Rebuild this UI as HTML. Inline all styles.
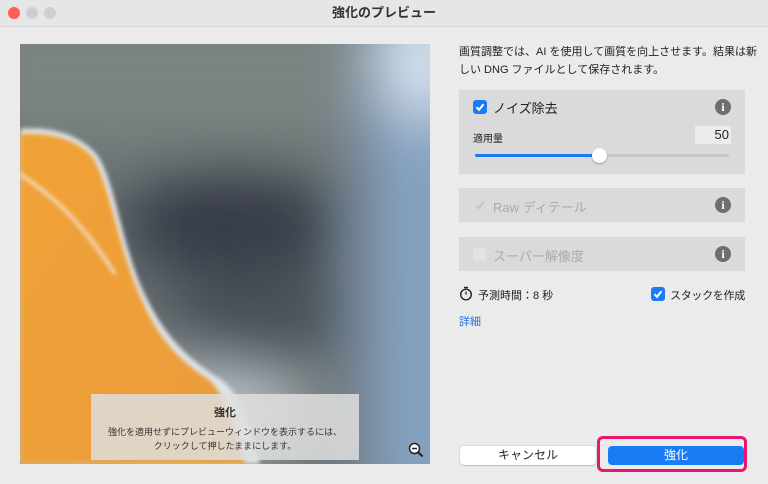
<!DOCTYPE html>
<html><head><meta charset="utf-8"><style>
html,body{margin:0;width:768px;height:484px;overflow:hidden}
body{background:#ebebeb;font-family:"Liberation Sans","Noto Sans CJK JP",sans-serif;position:relative;color:#222}
.tb{position:absolute;left:0;top:0;width:768px;height:26px;background:#e6e6e6;border-bottom:1px solid #d4d4d4;text-align:center;font-size:13px;font-weight:bold;line-height:26px;color:#333}
.dot{position:absolute;top:7px;width:12px;height:12px;border-radius:50%}
.img{position:absolute;left:20px;top:44px;width:410px;height:420px;overflow:hidden;background:#6a7274}
.abs{position:absolute}
.panel{position:absolute;left:459px;width:286px;background:#dadada}
.info{position:absolute;right:14px;width:16px;height:16px;border-radius:50%;background:#6e6e6e;color:#fff;font:bold 12px "Liberation Serif",serif;text-align:center;line-height:16px}
.cb{position:absolute;width:14px;height:14px;border-radius:3px;background:#1a7cf5}
</style></head><body>
<div class="tb">強化のプレビュー</div>
<div class="dot" style="left:8px;background:#fd5f57"></div>
<div class="dot" style="left:26px;background:#cfcfcf"></div>
<div class="dot" style="left:44px;background:#cfcfcf"></div>

<div class="img">
<svg width="410" height="420" viewBox="0 0 410 420">
<defs>
<filter id="b" filterUnits="userSpaceOnUse" x="-200" y="-200" width="810" height="820"><feGaussianBlur stdDeviation="30"/></filter>
<filter id="s" filterUnits="userSpaceOnUse" x="-50" y="-50" width="510" height="520"><feGaussianBlur stdDeviation="2"/></filter>
<linearGradient id="o" x1="0" y1="0" x2="1" y2="1"><stop offset="0" stop-color="#f1a236"/><stop offset="1" stop-color="#e99c3c"/></linearGradient>
</defs>
<rect width="410" height="420" fill="#6a7274"/>
<g filter="url(#b)">
<rect x="-50" y="-50" width="510" height="150" fill="#7c8482"/>
<ellipse cx="210" cy="180" rx="110" ry="55" fill="#343b47"/>
<ellipse cx="240" cy="270" rx="90" ry="50" fill="#4a5159"/>
<rect x="345" y="-50" width="120" height="520" fill="#86a3c2"/>
<ellipse cx="405" cy="15" rx="40" ry="60" fill="#dde9f4"/>
<ellipse cx="180" cy="370" rx="110" ry="40" fill="#c5ccd4"/>
</g>
<path d="M0 85 C30 82 60 90 78 112 C95 140 100 190 120 240 C140 285 160 310 200 335 C220 348 230 380 240 420 L0 420 Z" fill="#dfe3e8" filter="url(#s)"/>
<path d="M0 90 C30 88 58 95 74 115 C90 145 96 190 115 240 C133 285 150 310 188 335 C205 350 215 380 225 420 L0 420 Z" fill="url(#o)" filter="url(#s)"/>
<path d="M0 130 C30 150 60 175 95 230" stroke="#f4e6d6" stroke-width="3" fill="none" filter="url(#s)"/>
</svg>
 <div class="abs" style="left:71px;top:350px;width:268px;height:66px;background:rgba(222,222,222,.85);text-align:center;color:#333">
  <div style="font-size:11px;font-weight:bold;margin-top:10px">強化</div>
  <div style="font-size:9px;line-height:14px;margin-top:5px">強化を適用せずにプレビューウィンドウを表示するには、<br>クリックして押したままにします。</div>
 </div>
 <svg class="abs" style="left:388px;top:398px" width="16" height="16" viewBox="0 0 16 16"><circle cx="6.5" cy="6.5" r="5" fill="#fff" stroke="#222" stroke-width="1.5"/><line x1="4" y1="6.5" x2="9" y2="6.5" stroke="#222" stroke-width="1.5"/><line x1="10" y1="10" x2="14.5" y2="14.5" stroke="#222" stroke-width="2"/></svg>
</div>

<div class="abs" style="left:459px;top:43px;font-size:11px;line-height:18px;width:300px">画質調整では、AI を使用して画質を向上させます。結果は新しい DNG ファイルとして保存されます。</div>

<div class="panel" style="top:90px;height:84px">
 <div class="cb" style="left:14px;top:10px"><svg width="14" height="14"><path d="M3.5 7.2 L6 9.8 L10.5 4.2" stroke="#fff" stroke-width="2" fill="none"/></svg></div>
 <div class="abs" style="left:34px;top:8px;font-size:13px">ノイズ除去</div>
 <div class="info" style="top:9px">i</div>
 <div class="abs" style="left:14px;top:40px;font-size:10px">適用量</div>
 <div class="abs" style="left:236px;top:36px;width:34px;height:18px;background:#ececec;font-size:13px;text-align:right;line-height:18px;padding-right:2px">50</div>
 <div class="abs" style="left:16px;top:64px;width:254px;height:3px;background:#c8c8c8;border-radius:2px"></div>
 <div class="abs" style="left:16px;top:64px;width:126px;height:3px;background:#1a7cf5;border-radius:2px"></div>
 <div class="abs" style="left:133px;top:58px;width:15px;height:15px;border-radius:50%;background:#fff;box-shadow:0 1px 2px rgba(0,0,0,.3)"></div>
</div>

<div class="panel" style="top:188px;height:34px">
 <svg class="abs" style="left:14px;top:10px" width="14" height="14"><path d="M3 7.2 L6 10 L11 3.5" stroke="#c4c4c4" stroke-width="2" fill="none"/></svg>
 <div class="abs" style="left:34px;top:9px;font-size:13px;color:#aaa">Raw ディテール</div>
 <div class="info" style="top:9px">i</div>
</div>
<div class="panel" style="top:237px;height:34px">
 <div class="abs" style="left:14px;top:11px;width:13px;height:13px;border-radius:3px;background:#e3e3e3"></div>
 <div class="abs" style="left:34px;top:9px;font-size:13px;color:#aaa">スーパー解像度</div>
 <div class="info" style="top:9px">i</div>
</div>

<svg class="abs" style="left:459px;top:286px" width="14" height="15" viewBox="0 0 14 15"><circle cx="7" cy="8.5" r="5.3" fill="none" stroke="#222" stroke-width="1.4"/><line x1="5" y1="1.5" x2="9" y2="1.5" stroke="#222" stroke-width="1.4"/><line x1="7" y1="8.5" x2="7" y2="5.5" stroke="#222" stroke-width="1.3"/></svg>
<div class="abs" style="left:478px;top:287px;font-size:11px">予測時間：8 秒</div>
<div class="cb" style="left:651px;top:287px"><svg width="14" height="14"><path d="M3.5 7.2 L6 9.8 L10.5 4.2" stroke="#fff" stroke-width="2" fill="none"/></svg></div>
<div class="abs" style="left:670px;top:287px;font-size:11px;letter-spacing:-0.3px">スタックを作成</div>
<div class="abs" style="left:459px;top:313px;font-size:11px;color:#2a6ee0">詳細</div>

<div class="abs" style="left:460px;top:446px;width:136px;height:19px;background:#fff;border-radius:4px;box-shadow:0 0 1px rgba(0,0,0,.35),0 1px 1px rgba(0,0,0,.15);text-align:center;font-size:12px;line-height:19px">キャンセル</div>
<div class="abs" style="left:597px;top:436px;width:150px;height:36px;border:3px solid #e8166e;border-radius:6px;box-sizing:border-box"></div>
<div class="abs" style="left:608px;top:446px;width:136px;height:19px;background:#1a7cf5;border-radius:4px;text-align:center;font-size:12px;line-height:19px;color:#fff">強化</div>
</body></html>
